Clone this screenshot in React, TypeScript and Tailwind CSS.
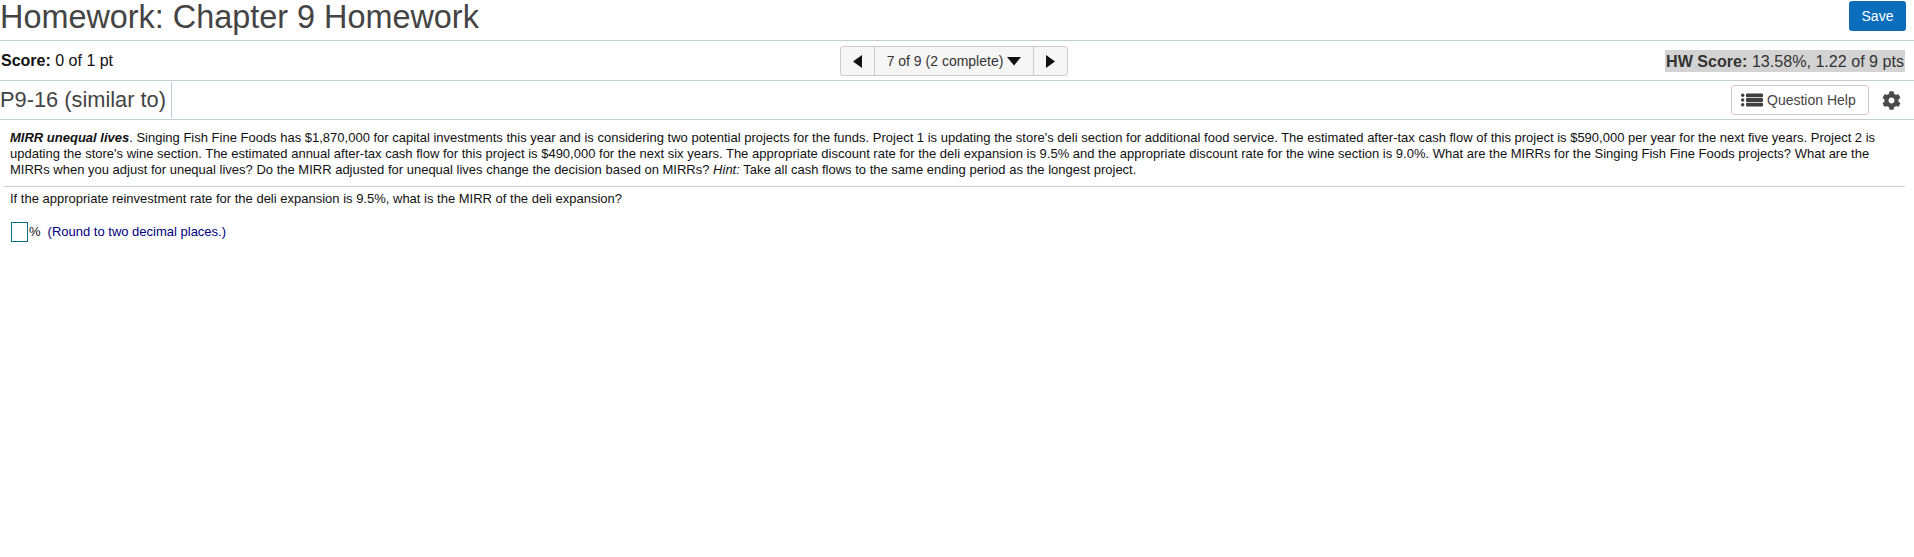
import React from "react"
import { FaCog } from "react-icons/fa"

function Triangle({ dir }: { dir: "left" | "right" | "down" }) {
  const points = dir === "left" ? "9,0 9,13 0,6.5" : dir === "right" ? "0,0 9,6.5 0,13" : "0,0 14,0 7,8.5"
  const w = dir === "down" ? 14 : 9
  const h = dir === "down" ? 9 : 13
  return (
    <svg width={w} height={h} viewBox={`0 0 ${w} ${h}`} className="shrink-0">
      <polygon points={points} fill="#111" />
    </svg>
  )
}

function ListIcon() {
  return (
    <svg width="22" height="14" viewBox="0 0 22 14" className="shrink-0">
      <circle cx="1.7" cy="2.2" r="1.7" fill="#3f3f3f" />
      <circle cx="1.7" cy="7" r="1.7" fill="#3f3f3f" />
      <circle cx="1.7" cy="11.8" r="1.7" fill="#3f3f3f" />
      <rect x="5" y="0.4" width="17" height="3.8" rx="1" fill="#3f3f3f" />
      <rect x="5" y="5.1" width="17" height="3.8" rx="1" fill="#3f3f3f" />
      <rect x="5" y="9.8" width="17" height="3.8" rx="1" fill="#3f3f3f" />
    </svg>
  )
}

export default function App() {
  return (
    <div className="w-[1914px] h-[557px] bg-white overflow-hidden font-['Liberation_Sans',Arial,sans-serif] text-[#111]">
      <div className="h-[41px] flex items-start justify-between border-b border-[#c3ccd9]">
        <h1 className="text-[32.4px] leading-[34px] text-[#444] font-normal whitespace-nowrap">Homework: Chapter 9 Homework</h1>
        <button className="mt-[1px] mr-[8px] w-[57px] h-[30px] bg-[#0a6ebd] rounded-[3px] text-white text-[14px]">Save</button>
      </div>

      <div className="h-[40px] flex items-center justify-between border-b border-[#c3ccd9] relative">
        <div className="pl-[1px] text-[16px]"><b>Score:</b> 0 of 1 pt</div>
        <div className="absolute left-[840px] top-[5px] h-[30px] w-[228px] flex border border-[#ccc] rounded-[3px] bg-[#f6f6f6] text-[14px] text-[#333]">
          <div className="w-[34px] flex items-center justify-center border-r border-[#ccc]"><Triangle dir="left" /></div>
          <div className="flex-1 flex items-center justify-center gap-[4px]">7 of 9 (2 complete) <Triangle dir="down" /></div>
          <div className="w-[34px] flex items-center justify-center border-l border-[#ccc]"><Triangle dir="right" /></div>
        </div>
        <div className="mr-[9px] h-[22px] leading-[22px] px-[1px] bg-[#d3d3d3] text-[16.1px] text-[#333] whitespace-nowrap"><b>HW Score:</b> 13.58%, 1.22 of 9 pts</div>
      </div>

      <div className="h-[39px] flex items-center justify-between border-b border-[#c3ccd9]">
        <div className="h-[36px] flex items-center pr-[5px] border-r border-[#c3ccd9] text-[21.8px] text-[#444] whitespace-nowrap">P9-16 (similar to)</div>
        <div className="flex items-center">
          <button className="h-[30px] w-[138px] flex items-center pl-[9px] gap-[4px] border border-[#ccc] rounded-[3px] text-[14px] text-[#444]">
            <ListIcon /> Question Help
          </button>
          <div className="ml-[13px] mr-[13px] flex text-[#4a4a4a]"><FaCog size={19} /></div>
        </div>
      </div>

      <div className="pl-[4px] pr-[9px] pt-[10px] text-[13px] leading-[16px] text-[#111]">
        <div className="pb-[8px] border-b border-[#ccc]">
          <p className="pl-[6px]">
            <b><i>MIRR unequal lives</i></b>. Singing Fish Fine Foods has $1,870,000 for capital investments this year and is considering two potential projects for the funds. Project 1 is updating the store's deli section for additional food service. The estimated after-tax cash flow of this project is $590,000 per year for the next five years. Project 2 is updating the store's wine section. The estimated annual after-tax cash flow for this project is $490,000 for the next six years. The appropriate discount rate for the deli expansion is 9.5% and the appropriate discount rate for the wine section is 9.0%. What are the MIRRs for the Singing Fish Fine Foods projects? What are the MIRRs when you adjust for unequal lives? Do the MIRR adjusted for unequal lives change the decision based on MIRRs? <i>Hint:</i> Take all cash flows to the same ending period as the longest project.
          </p>
        </div>
        <p className="mt-[4px] pl-[6px]">If the appropriate reinvestment rate for the deli expansion is 9.5%, what is the MIRR of the deli expansion?</p>
        <div className="mt-[15px] pl-[7px] flex items-center">
          <span className="w-[17px] h-[20px] border-[1.5px] border-[#0f6f8f]" />
          <span className="ml-[1px]">%</span>
          <span className="ml-[7px] text-[#000080]">(Round to two decimal places.)</span>
        </div>
      </div>
    </div>
  )
}
